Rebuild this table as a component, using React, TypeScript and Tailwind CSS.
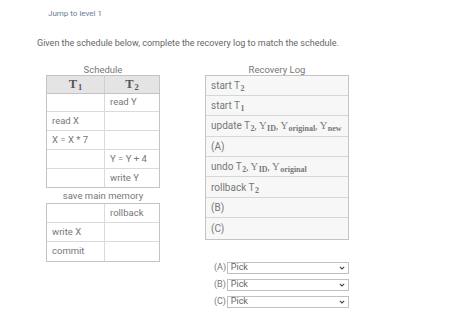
import React from "react";

const sans = { fontFamily: "Roboto, 'Liberation Sans', sans-serif" };
const serif = { fontFamily: "'Liberation Serif', 'DejaVu Serif', serif" };

// Small bold serif subscript, nudged below the baseline
function Sub({ children }: { children: React.ReactNode }) {
  return (
    <span className="relative top-[2px] text-[8px] font-bold leading-none ml-[0.5px]" style={serif}>
      {children}
    </span>
  );
}

function MathT({ n }: { n: string }) {
  return (
    <span className="font-bold text-[12.5px] leading-none text-[#555]" style={serif}>
      T<span className="relative top-[2px] text-[8.5px] ml-[1px]">{n}</span>
    </span>
  );
}

function Y({ s }: { s: string }) {
  return (
    <span style={serif} className="text-[10.5px]">
      Y<Sub>{s}</Sub>
    </span>
  );
}

type Row = [string, string];

function ScheduleTable({ rows, header }: { rows: Row[]; header?: boolean }) {
  return (
    <div className="border border-[#c4c4c4] w-[114px]">
      {header && (
        <div className="grid grid-cols-[58px_1fr] h-[18px] bg-[#e4e4e4] border-b border-[#c4c4c4]">
          <div className="flex items-center justify-center border-r border-[#d0d0d0]">
            <MathT n="1" />
          </div>
          <div className="flex items-center justify-center">
            <MathT n="2" />
          </div>
        </div>
      )}
      {rows.map((r, i) => (
        <div
          key={i}
          className={`grid grid-cols-[58px_1fr] h-[18.8px] ${i < rows.length - 1 ? "border-b border-[#dadada]" : ""}`}
        >
          <div className="flex items-center pl-[5px] border-r border-[#dadada]">{r[0]}</div>
          <div className="flex items-center pl-[5px]">{r[1]}</div>
        </div>
      ))}
    </div>
  );
}

const logRows: React.ReactNode[] = [
  <>start T<Sub>2</Sub></>,
  <>start T<Sub>1</Sub></>,
  <>
    update T<Sub>2</Sub>, <Y s="ID" />, <Y s="original" />, <Y s="new" />
  </>,
  <>(A)</>,
  <>
    undo T<Sub>2</Sub>, <Y s="ID" />, <Y s="original" />
  </>,
  <>rollback T<Sub>2</Sub></>,
  <>(B)</>,
  <>(C)</>,
];

function Picker({ label }: { label: string }) {
  return (
    <div className="flex items-center h-[17px]">
      <span className="w-[14px] text-[9px] text-[#777]">{label}</span>
      <div className="w-[133px] h-[12px] border border-[#c0c0c0] flex items-center justify-between pl-[3px] pr-[3px] bg-white text-[#666] text-[9px]">
        <span>Pick</span>
        <svg width="6" height="4" viewBox="0 0 6 4">
          <path d="M0.8 0.8 L3 3 L5.2 0.8" fill="none" stroke="#444" strokeWidth="1.1" />
        </svg>
      </div>
    </div>
  );
}

export default function App() {
  return (
    <div className="w-[474px] h-[332px] bg-white text-[#777] text-[9.5px]" style={sans}>
      <div className="pl-[48px] pt-[8px] text-[8px] text-[#6a7c98]">Jump to level 1</div>
      <div className="pl-[37px] mt-[17px] text-[9px] text-[#666]">
        Given the schedule below, complete the recovery log to match the schedule.
      </div>
      <div className="flex mt-[13px]">
        <div className="ml-[46px] w-[114px] flex flex-col">
          <div className="h-[11px] text-center leading-[11px]">Schedule</div>
          <ScheduleTable
            header
            rows={[
              ["", "read Y"],
              ["read X", ""],
              ["X = X * 7", ""],
              ["", "Y = Y + 4"],
              ["", "write Y"],
            ]}
          />
          <div className="h-[15px] text-center leading-[15px]">save main memory</div>
          <ScheduleTable
            rows={[
              ["", "rollback"],
              ["write X", ""],
              ["commit", ""],
            ]}
          />
        </div>
        <div className="ml-[45px] w-[144px] flex flex-col">
          <div className="h-[11px] text-center leading-[11px]">Recovery Log</div>
          <div className="border border-[#c4c4c4] bg-[#f7f7f7] text-[10px]">
            {logRows.map((c, i) => (
              <div
                key={i}
                className={`h-[20.4px] flex items-center pl-[5px] whitespace-nowrap ${i < logRows.length - 1 ? "border-b border-[#d6d6d6]" : ""}`}
              >
                <span>{c}</span>
              </div>
            ))}
          </div>
          <div className="mt-[20px] ml-[9px] flex flex-col">
            <Picker label="(A)" />
            <Picker label="(B)" />
            <Picker label="(C)" />
          </div>
        </div>
      </div>
    </div>
  );
}
